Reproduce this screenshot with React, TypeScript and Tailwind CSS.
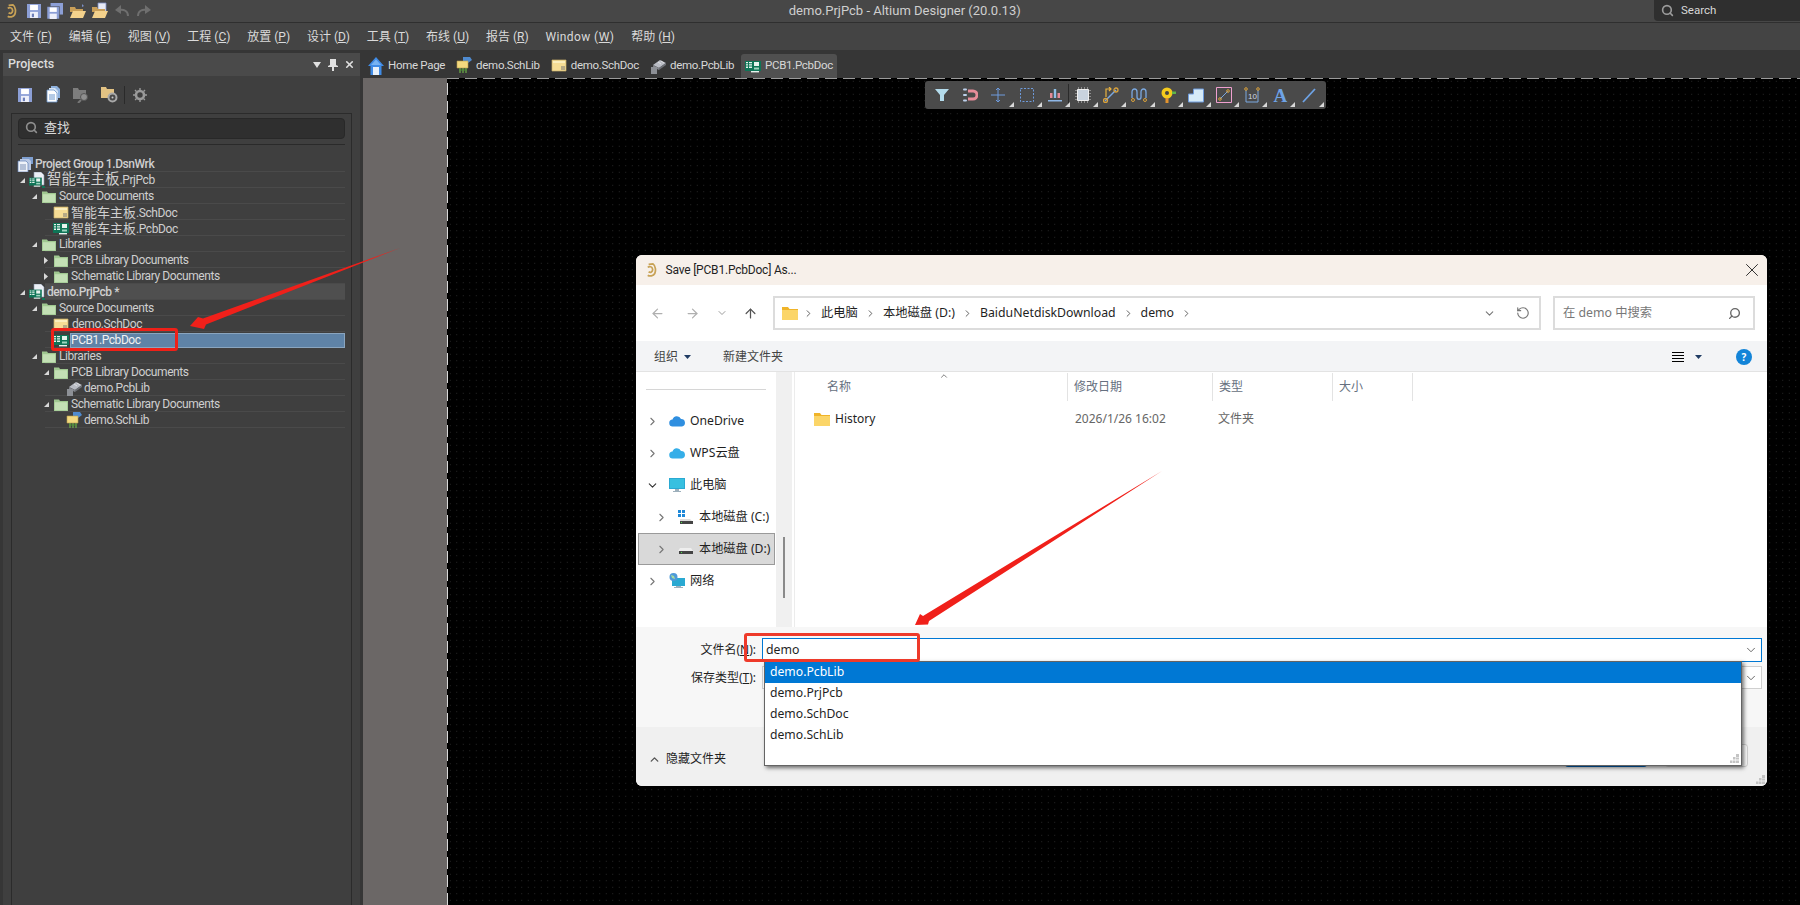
import React from 'react';
import { ArrowLeft, ArrowRight, ArrowUp, ChevronDown, ChevronRight, ChevronUp, RotateCw, Search, X } from 'lucide-react';

// small drawn icons
const Logo = ({ size = 14 }: { size?: number }) => (
  <svg width={size * 0.75} height={size} viewBox="0 0 12 16" fill="none" className="shrink-0">
    <path d="M3 1.500 L8 1 C11 3 11.500 9 10 12 C8.500 15 4 15.500 2 14 M2 5 C4 3.500 7 4 7.500 7 C8 10 5 11.500 3 10" stroke="#c8a256" strokeWidth="2" />
  </svg>
);

const Floppy = ({ size = 14 }: { size?: number }) => (
  <svg width={size} height={size} viewBox="0 0 16 16" className="shrink-0">
    <path d="M0 0h16v16H0z" fill="#8c9fd6" />
    <path d="M3.500 1h9v6h-9z" fill="#fff" />
    <path d="M3.500 9h9v7h-9z" fill="#eef0fa" />
    <path d="M5.500 11h2.500v4H5.500z" fill="#6d7fb8" />
  </svg>
);

const Floppies = () => (
  <svg width="16" height="16" viewBox="0 0 18 18" className="shrink-0">
    <path d="M4 0h14v13H4z" fill="#8c9fd6" />
    <path d="M0 4h14v14H0z" fill="#8c9fd6" stroke="#444" strokeWidth=".6" />
    <path d="M3 5h8v5H3z" fill="#fff" />
    <path d="M3 12h8v6H3z" fill="#eef0fa" />
  </svg>
);

const OpenFolder = ({ page }: { page?: boolean }) => (
  <svg width="18" height="18" viewBox="0 0 18 18" className="shrink-0">
    {page && <path d="M7 1h8v9H7z" fill="#e8eaf4" stroke="#7d8fc6" strokeWidth=".8" />}
    {!page && <path d="M13 2l2 2-2 1z" fill="#7d8fc6" />}
    <path d="M1 5h5l1 2h7v3H1z" fill="#c99f58" />
    <path d="M1 16l3-7h13l-3 7z" fill="#f4d28c" />
  </svg>
);

const Undo = ({ flip }: { flip?: boolean }) => (
  <svg width="16" height="14" viewBox="0 0 16 14" fill="none" className={flip ? '-scale-x-100 shrink-0' : 'shrink-0'}>
    <path d="M14 12c0-5-4-7-9-6" stroke="#6f6f6f" strokeWidth="2" />
    <path d="M7 1L1 6l6 4z" fill="#6f6f6f" />
  </svg>
);

const Files = () => (
  <svg width="15" height="17" viewBox="0 0 15 17" className="shrink-0">
    <path d="M5 0h6l3 3v9H5z" fill="#8fb2de" />
    <path d="M3 2h6l3 3v9H3z" fill="#d4e2f3" />
    <path d="M1 4h7l3 3v9H1z" fill="#fff" stroke="#6b96cc" strokeWidth=".8" />
    <path d="M3 9h6M3 11h6M3 13h6" stroke="#6b96cc" />
  </svg>
);

const FolderSearch = () => (
  <svg width="16" height="16" viewBox="0 0 16 16" className="shrink-0">
    <path d="M0 1h5l1 2h7v9H0z" fill="#7d7d7d" />
    <circle cx="11" cy="10" r="3.500" fill="#8f8f8f" stroke="#555" />
    <path d="M8 13l-3 3" stroke="#777" strokeWidth="2" />
  </svg>
);

const FolderGear = () => (
  <svg width="17" height="17" viewBox="0 0 17 17" className="shrink-0">
    <path d="M0 1h5l1 2h7v9H0z" fill="#e2c283" />
    <circle cx="11.500" cy="11.500" r="4" fill="#4a4a4a" stroke="#a8a8a8" strokeWidth="2" />
    <circle cx="11.500" cy="11.500" r="1" fill="#c9c9c9" />
  </svg>
);

const Gear = () => (
  <svg width="14" height="14" viewBox="0 0 14 14" fill="none" className="shrink-0">
    <circle cx="7" cy="7" r="4" stroke="#9a9a9a" strokeWidth="2.600" />
    <path d="M7 0v14M0 7h14M2 2l10 10M12 2L2 12" stroke="#9a9a9a" strokeWidth="1.400" strokeDasharray="2 10 2" />
  </svg>
);

const GroupIcon = () => (
  <svg width="17" height="16" viewBox="0 0 17 16" className="shrink-0">
    <path d="M5 1h11v7H5z" fill="#7f9fd0" />
    <path d="M3 3h9l2 2v9H3z" fill="#b9c8e4" />
    <path d="M1 5h8l2 2v9H1z" fill="#eef2f9" stroke="#5f7fb5" strokeWidth=".7" />
    <path d="M3 9h6M3 11h6M3 13h6" stroke="#7a8fb5" />
  </svg>
);

const Board = () => (
  <>
    <path d="M0 2h16v10H0z" fill="#0f7557" />
    <path d="M1 3h2v1.300H1zM1 5.300h2v1.300H1zM1 7.600h2v1.300H1zM4 3h3v1.300H4zM4 5.300h3v1.300H4zM4 7.600h3v1.300H4z" fill="#e7f3ee" />
    <path d="M9 3h5v4H9z" fill="#e7f3ee" />
    <path d="M9 8.500h5v2H9z" fill="#9fd6c0" />
    <path d="M6 12h8v1.400H6z" fill="#e7f3ee" />
  </>
);

const PcbIcon = () => (
  <svg width="16" height="14" viewBox="0 0 16 14" className="shrink-0"><Board /></svg>
);

const ProjectIcon = () => (
  <svg width="16" height="16" viewBox="0 0 16 16" className="shrink-0">
    <path d="M5 0h7l3 3v10H5z" fill="#eceff5" stroke="#8b97ad" strokeWidth=".6" />
    <g transform="translate(0 4) scale(.8)"><Board /></g>
    <path d="M13 14h3v2h-3z" fill="#0f7557" />
  </svg>
);

const SchDocIcon = () => (
  <svg width="16" height="13" viewBox="0 0 16 13" className="shrink-0">
    <path d="M1 1h14v11H1z" fill="#f6dd95" stroke="#c9b06a" strokeWidth=".7" />
    <path d="M2 2h12v2H2z" fill="#fbeebd" />
    <path d="M10 8h4M10 10h4" stroke="#777" />
  </svg>
);

const GreenFolder = () => (
  <svg width="14" height="13" viewBox="0 0 14 13" className="shrink-0">
    <path d="M0 1.500h5l1 1.500h8v10H0z" fill="#9fc890" />
    <path d="M.8 4.200h12.400V12.300H.8z" fill="#c3e0b5" />
  </svg>
);

const SchLibIcon = () => (
  <svg width="16" height="17" viewBox="0 0 16 17" className="shrink-0">
    <path d="M7 0h7l2 3-4 3H7z" fill="#4f8bd0" />
    <path d="M1 4h11v7H1z" fill="#f3d97f" stroke="#b89e4a" strokeWidth=".6" />
    <path d="M4 11v5M7 11v5M10 11v5" stroke="#6fb04a" strokeWidth="1.200" />
    <path d="M3 13h8" stroke="#4e8f3a" />
  </svg>
);

const PcbLibIcon = () => (
  <svg width="16" height="16" viewBox="0 0 16 16" className="shrink-0">
    <path d="M3 7l7-5 6 3-7 5z" fill="#b9bcc4" />
    <path d="M3 7l6 3v2l-6-3z" fill="#80838a" />
    <path d="M9 10l7-5v2l-7 5z" fill="#6d7076" />
    <path d="M1 9h6v7H1z" fill="#8d9096" />
    <path d="M8 4l3 2M11 3l3 2" stroke="#eee" strokeWidth=".7" />
  </svg>
);

const HomeIcon = () => (
  <svg width="16" height="18" viewBox="0 0 16 18" className="shrink-0">
    <path d="M8 0L0 9h2.500v9h11V9H16z" fill="#3f8be6" />
    <path d="M5 10h6v8H5z" fill="#e8f1fb" />
    <path d="M8 2.500L3 8h10z" fill="#78b3f2" />
  </svg>
);

// tool icons for the floating pcb bar
const tools = [
  <path key="f" d="M1 2h14l-5 6v6H6V8z" fill="#b4dcec" />,
  <g key="m" fill="none"><path d="M6 4h5a4 4 0 010 8H6" stroke="#e58c99" strokeWidth="3" /><path d="M2 2.500h2M2 8h2M2 13.500h2" stroke="#bcd0ea" strokeWidth="2" strokeLinecap="round" /></g>,
  <path key="c" d="M8 1v14M1 8h14M6 3l2-2 2 2M6 13l2 2 2-2" stroke="#6e9bdc" fill="none" />,
  <path key="r" d="M1.500 1.500h13v13h-13z" stroke="#6e9bdc" strokeDasharray="2 1.500" fill="none" />,
  <g key="b"><path d="M3 6h2.500v5H3zM10.500 6H13v5h-2.500z" fill="#e58c99" /><path d="M6.800 2h2.400v9H6.800z" fill="#8fc0e8" /><path d="M1 13h14v1.500H1z" fill="#8fb7e6" /></g>,
  <g key="i"><path d="M1 3v1M1 6v1M1 9v1M1 12v1M15 3v1M15 6v1M15 9v1M15 12v1M3 1h1M6 1h1M9 1h1M12 1h1M3 15h1M6 15h1M9 15h1M12 15h1" stroke="#d0d0d0" /><path d="M2.500 2.500h11v11h-11z" fill="#c9d3de" stroke="#efefef" /></g>,
  <g key="t" fill="none"><path d="M2 14L13 3" stroke="#7aa8e0" strokeWidth="1.400" /><circle cx="2.500" cy="13.500" r="2" stroke="#d8a13c" strokeWidth="1.300" /><circle cx="13" cy="3" r="2" stroke="#d8a13c" strokeWidth="1.300" /><path d="M3 10V2h5M6 0l2 2-2 2" stroke="#e8b23f" strokeWidth="1.200" /></g>,
  <g key="w" fill="none"><path d="M1 11V5c0-4 5-4 5 0v5c0 3 4 3 4 0V5c0-4 5-4 5 0v6" stroke="#7aa8e0" strokeWidth="1.300" /><circle cx="2" cy="13" r="1.500" stroke="#d8a13c" /><circle cx="14" cy="13" r="1.500" stroke="#d8a13c" /></g>,
  <g key="p"><circle cx="7" cy="6" r="5.500" fill="#f5cb1d" /><circle cx="7" cy="6" r="2" fill="#444" /><path d="M12 4.500h4v2.500h-4z" fill="#5fb548" /><path d="M5.500 11h3v5h-3z" fill="#e3942e" /></g>,
  <path key="y" d="M.5 15V7h5V2h10v13z" fill="#d6ebf7" stroke="#6e9bdc" />,
  <g key="k" fill="none"><path d="M.5.5h15v15H.5z" stroke="#f0a0d0" /><path d="M4 12l8-8" stroke="#7aa8e0" /><circle cx="4" cy="12" r="1.300" stroke="#d8a13c" /><circle cx="12" cy="4" r="1.300" stroke="#d8a13c" /></g>,
  <g key="d" fill="none"><path d="M2 3v12h12V3" stroke="#7aa8e0" /><circle cx="2" cy="2" r="1.300" stroke="#d8a13c" /><circle cx="14" cy="2" r="1.300" stroke="#d8a13c" /><text x="4" y="12" fontSize="8" fill="#cfd8e6" stroke="none" fontFamily="Liberation Sans">10</text></g>,
  null,
  <path key="l" d="M2 15L14 2" stroke="#6ea3e6" strokeWidth="1.800" />,
];

type Row = {
  pad: string;
  caret?: 'open' | 'closed';
  icon: React.ReactNode;
  label: React.ReactNode;
  hilite?: boolean;
};

const Cn = ({ children, big }: { children: React.ReactNode; big?: boolean }) => (
  <span className={big ? 'text-[14.500px] tracking-normal' : 'text-[13px] tracking-normal'}>{children}</span>
);

const rows: Row[] = [
  { pad: '-ml-px', icon: <GroupIcon />, label: <span className="pl-[1px] font-medium">Project Group 1.DsnWrk</span> },
  { pad: 'pl-[2px]', caret: 'open', icon: <ProjectIcon />, label: <span className="pl-[2px]"><Cn big>智能车主板</Cn>.PrjPcb</span> },
  { pad: 'pl-[14px]', caret: 'open', icon: <GreenFolder />, label: <span className="pl-[3px]">Source Documents</span> },
  { pad: 'pl-[35px]', icon: <SchDocIcon />, label: <span className="pl-[2px]"><Cn>智能车主板</Cn>.SchDoc</span> },
  { pad: 'pl-[35px]', icon: <PcbIcon />, label: <span className="pl-[2px]"><Cn>智能车主板</Cn>.PcbDoc</span> },
  { pad: 'pl-[14px]', caret: 'open', icon: <GreenFolder />, label: <span className="pl-[3px]">Libraries</span> },
  { pad: 'pl-[26px]', caret: 'closed', icon: <GreenFolder />, label: <span className="pl-[3px]">PCB Library Documents</span> },
  { pad: 'pl-[26px]', caret: 'closed', icon: <GreenFolder />, label: <span className="pl-[3px]">Schematic Library Documents</span> },
  { pad: 'pl-[2px]', caret: 'open', hilite: true, icon: <ProjectIcon />, label: <span className="pl-[2px] font-medium">demo.PrjPcb *</span> },
  { pad: 'pl-[14px]', caret: 'open', icon: <GreenFolder />, label: <span className="pl-[3px]">Source Documents</span> },
  { pad: 'pl-[35px]', icon: <SchDocIcon />, label: <span className="pl-[3px]">demo.SchDoc</span> },
  { pad: 'pl-[35px]', icon: <PcbIcon />, label: <span className="ml-[1px] flex h-[15px] w-[275px] items-center border border-[#8aa5bf] bg-[#5f83a7] text-[#f2f2f2]">PCB1.PcbDoc</span> },
  { pad: 'pl-[14px]', caret: 'open', icon: <GreenFolder />, label: <span className="pl-[3px]">Libraries</span> },
  { pad: 'pl-[26px]', caret: 'open', icon: <GreenFolder />, label: <span className="pl-[3px]">PCB Library Documents</span> },
  { pad: 'pl-[48px]', icon: <PcbLibIcon />, label: <span className="pl-[2px]">demo.PcbLib</span> },
  { pad: 'pl-[26px]', caret: 'open', icon: <GreenFolder />, label: <span className="pl-[3px]">Schematic Library Documents</span> },
  { pad: 'pl-[48px]', icon: <SchLibIcon />, label: <span className="pl-[2px]">demo.SchLib</span> },
];

const menu: [string, string][] = [
  ['文件 ', 'F'], ['编辑 ', 'E'], ['视图 ', 'V'], ['工程 ', 'C'], ['放置 ', 'P'], ['设计 ', 'D'],
  ['工具 ', 'T'], ['布线 ', 'U'], ['报告 ', 'R'], ['Window ', 'W'], ['帮助 ', 'H'],
];

const TopBars = () => (
  <>
    <div className="relative flex h-[23px] items-center border-b border-[#2f2f2f] bg-[#474747] pl-[6px]">
      <Logo />
      <div className="ml-[10px]"><Floppy /></div>
      <div className="ml-[6px]"><Floppies /></div>
      <div className="ml-[6px]"><OpenFolder /></div>
      <div className="ml-[4px]"><OpenFolder page /></div>
      <div className="ml-[5px]"><Undo /></div>
      <div className="ml-[6px]"><Undo flip /></div>
      <div className="flex-1 pl-[4px] text-center text-[13px] text-[#cfcfcf]">demo.PrjPcb - Altium Designer (20.0.13)</div>
      <div className="flex h-[21px] w-[146px] items-center self-start rounded-bl-[4px] bg-[#2f2f2f] pl-[7px] text-[11.500px] text-[#d8d8d8]">
        <Search size={13} strokeWidth={3} className="mr-[7px] text-[#9c9c9c]" />Search
      </div>
    </div>
    <div className="flex h-[27px] items-center gap-[16.800px] bg-[#444444] pl-[10px] text-[12px] text-[#dadada]">
      {menu.map(([name, key]) => (
        <span key={key} className={key === 'W' ? 'whitespace-pre tracking-[0.4px]' : 'whitespace-pre'}>{name}(<u>{key}</u>)</span>
      ))}
    </div>
  </>
);

const ProjectsPanel = () => (
  <div className="flex w-[363px] shrink-0 flex-col pl-[3px] pr-[3px] pt-[3px]">
    <div className="flex h-[23px] items-center bg-[#4a4a4a] pl-[5px] pr-[5px] text-[12.500px] font-medium text-[#dcdcdc]">
      <span className="flex-1">Projects</span>
      <svg width="8" height="6" viewBox="0 0 8 6" className="mr-[7px]"><path d="M0 0h8L4 6z" fill="#e0e0e0" /></svg>
      <svg width="10" height="12" viewBox="0 0 10 12" className="mr-[6px]"><path d="M2 0h6v6l2 1v1H6v4H4V8H0V7l2-1z" fill="#e0e0e0" /></svg>
      <X size={11} strokeWidth={3.500} className="text-[#e0e0e0]" />
    </div>
    <div className="flex flex-1 flex-col bg-[#3f3f3f] px-[8px]">
      <div className="flex h-[37px] items-center pl-[7px]">
        <Floppy />
        <div className="ml-[14px]"><Files /></div>
        <div className="ml-[12px]"><FolderSearch /></div>
        <div className="ml-[12px]"><FolderGear /></div>
        <div className="ml-[6px] h-[18px] w-px bg-[#2a2a2a]" />
        <div className="ml-[8px]"><Gear /></div>
      </div>
      <div className="flex flex-1 flex-col border border-b-0 border-[#2b2b2b] px-[6px] pt-[4px]">
        <div className="flex h-[21px] items-center rounded-[4px] border border-[#282828] bg-[#2f2f2f] pb-[2px] pl-[6px] text-[#dadada]">
          <Search size={13} strokeWidth={3} className="mr-[6px] text-[#8f8f8f]" />
          <span className="text-[13px]">查找</span>
        </div>
        <div className="mt-[5px] h-px bg-[#2a2a2a]" />
        <div className="mt-[11px] text-[12px] leading-none tracking-[-0.42px] text-[#cfcfcf]">
          {rows.map((r, i) => (
            <div key={i} className={`relative flex h-[16px] items-center ${r.pad}`}>
              {r.hilite && <div className="absolute inset-y-0 left-[27px] right-0 bg-[#4f4f4f]" />}
              <div className="absolute bottom-0 left-[27px] right-0 h-px bg-[#4a4a4a]" />
              <div className="relative flex items-center">
                {r.caret === 'open' && (
                  <svg width="5" height="5" viewBox="0 0 5 5" className={i === 1 || i === 8 ? 'mr-[4px]' : 'mr-[5px]'}><path d="M5 0v5H0z" fill="#d8d8d8" /></svg>
                )}
                {r.caret === 'closed' && (
                  <svg width="4" height="7" viewBox="0 0 4 7" className="mr-[6px]"><path d="M0 0l4 3.500L0 7z" fill="#d8d8d8" /></svg>
                )}
                {r.icon}
                {r.label}
              </div>
            </div>
          ))}
        </div>
      </div>
    </div>
  </div>
);

const Tab = ({ icon, label, active }: { icon: React.ReactNode; label: string; active?: boolean }) => (
  <div className={`flex items-center gap-[4px] text-[11.500px] tracking-[-0.3px] text-[#d8d8d8] ${active ? '-ml-[4px] h-[24px] self-end rounded-t-[3px] bg-[#505050] pl-[4px] pr-[4px]' : 'mr-[11px]'}`}>
    {icon}{label}
  </div>
);

const Canvas = () => (
  <div className="flex min-w-0 flex-1 flex-col">
    <div className="flex h-[28px] items-center pl-[5px] pt-[3px]">
      <Tab icon={<HomeIcon />} label="Home Page" />
      <Tab icon={<SchLibIcon />} label="demo.SchLib" />
      <Tab icon={<SchDocIcon />} label="demo.SchDoc" />
      <Tab icon={<PcbLibIcon />} label="demo.PcbLib" />
      <Tab icon={<PcbIcon />} label="PCB1.PcbDoc" active />
    </div>
    <div className="flex flex-1">
      <div className="w-[84px] bg-[#6b6766]" />
      <div className="relative flex-1 bg-black bg-[radial-gradient(circle,#2e2e2e_0.6px,transparent_0.8px)] bg-[length:6.500px_6.500px]">
        <div className="h-px bg-[repeating-linear-gradient(90deg,#9a9a9a_0,#9a9a9a_12px,transparent_12px,transparent_18px)]" />
        <div className="absolute left-0 top-0 h-full w-px bg-[repeating-linear-gradient(0deg,#d8d8d8_0,#d8d8d8_12px,transparent_12px,transparent_18px)]" />
        <div className="absolute left-[478px] top-[3px] flex h-[28px] items-center rounded-[3px] bg-[#4a4a4a] pl-[3px] pr-[3px]">
          {tools.map((t, i) => (
            <React.Fragment key={i}>
              {i === 5 && <div className="-ml-px h-[22px] w-px bg-[#2a2a2a]" />}
              <div className="relative flex h-[28px] w-[28.200px] items-center justify-center">
                {t ? (
                  <svg width="16" height="16" viewBox="0 0 16 16">{t}</svg>
                ) : (
                  <span className="font-['Liberation_Serif',serif] text-[19px] font-bold leading-none text-[#6ea3e6]">A</span>
                )}
                {i > 1 && <div className="absolute bottom-[2px] right-[-1px] h-0 w-0 border-b-[5px] border-l-[5px] border-b-[#d8d8d8] border-l-transparent" />}
              </div>
            </React.Fragment>
          ))}
        </div>
      </div>
    </div>
  </div>
);

const Sep = () => <ChevronRight size={11} className="mx-[7px] shrink-0 text-[#555]" />;

const Cloud = ({ tone }: { tone: string }) => (
  <svg width="16" height="12" viewBox="0 0 16 12">
    <path d="M4 11.500a3.500 3.500 0 01-.5-7A4.500 4.500 0 0112 4a3.800 3.800 0 011 7.500z" fill={tone} />
  </svg>
);

const NavItem = ({ chev, indent, icon, label, open, active }: { chev: string; indent?: boolean; icon: React.ReactNode; label: string; open?: boolean; active?: boolean }) => (
  <div className={`flex h-[32px] items-center ${active ? 'ml-[2px] mr-px border border-[#9a9a9a] bg-[#d9d9d9]' : ''}`}>
    <div className={chev}>
      {open ? <ChevronDown size={13} className="text-[#333]" /> : <ChevronRight size={13} className="text-[#777]" />}
    </div>
    <div className={indent ? 'ml-[7px] flex w-[20px] justify-center' : 'ml-[9px] flex w-[18px] justify-center'}>{icon}</div>
    <span className="ml-[4px] whitespace-nowrap text-[12.200px]">{label}</span>
  </div>
);

const Header = ({ w, label }: { w: string; label: string }) => (
  <div className={`flex h-[28px] items-center border-r border-[#e3e3e3] pl-[6px] text-[#667080] ${w}`}>{label}</div>
);

const YellowFolder = () => (
  <svg width="16" height="13" viewBox="0 0 16 13" className="shrink-0">
    <path d="M0 0h6l1.500 2H16v3H0z" fill="#f0b429" />
    <path d="M0 3h16v10H0z" fill="#fbd568" />
  </svg>
);

const Grip = ({ className }: { className: string }) => (
  <svg width="9" height="9" viewBox="0 0 9 9" className={className}>
    <path d="M6 0h3v3H6zM3 3h2.500v2.500H3zM6 3.500h3v2H6zM0 6.500h2.500V9H0zM3 6.500h2.500V9H3zM6 6.500h3V9H6z" fill="#c4c4c4" />
  </svg>
);

const SaveDialog = () => (
  <div className="absolute left-[636px] top-[255px] flex h-[531px] w-[1131px] flex-col overflow-hidden rounded-[6px] bg-white text-[12px] text-[#1f1f1f]">
    <div className="flex h-[30px] items-center bg-[#f7f0ea] pl-[10px] pr-[4px]">
      <Logo size={14} />
      <span className="ml-[9px] flex-1 font-['Roboto','Noto_Sans_CJK_SC',sans-serif] tracking-[-0.2px]">Save [PCB1.PcbDoc] As...</span>
      <X size={22} strokeWidth={1} className="text-[#222]" />
    </div>
    <div className="flex h-[56px] items-center pl-[14px] pr-[12px]">
      <ArrowLeft size={15} className="text-[#b0b0b0]" />
      <ArrowRight size={15} className="ml-[20px] text-[#b0b0b0]" />
      <ChevronDown size={12} className="ml-[16px] text-[#9c9c9c]" />
      <ArrowUp size={15} className="ml-[15px] text-[#555]" />
      <div className="ml-[15px] flex h-[34px] flex-1 items-center border-2 border-[#dcdcdc] pl-[7px] pr-[9px] text-[12.300px]">
        <div className="-mr-[2px]"><YellowFolder /></div>
        <Sep />
        此电脑
        <Sep />
        本地磁盘 (D:)
        <Sep />
        BaiduNetdiskDownload
        <Sep />
        demo
        <Sep />
        <ChevronDown size={13} className="ml-auto mr-[20px] text-[#777]" />
        <RotateCw size={14} className="-scale-x-100 text-[#777]" />
      </div>
      <div className="ml-[12px] flex h-[34px] w-[202px] items-center justify-between border-2 border-[#dcdcdc] pl-[8px] pr-[12px] text-[12.300px] text-[#777]">
        在 demo 中搜索
        <Search size={13} strokeWidth={2.500} className="-scale-x-100 text-[#666]" />
      </div>
    </div>
    <div className="flex h-[31px] items-center border-b border-[#e3e3e3] bg-[#f3f4f6] pl-[18px] pr-[15px] pt-[2px] text-[#444]">
      组织
      <svg width="7" height="4" viewBox="0 0 7 4" className="ml-[6px]"><path d="M0 0h7L3.500 4z" fill="#1f3b63" /></svg>
      <span className="ml-[32px] flex-1">新建文件夹</span>
      <div className="flex flex-col gap-[2px]">
        <div className="h-px w-[12px] bg-black" /><div className="h-px w-[12px] bg-black" />
        <div className="h-px w-[12px] bg-black" /><div className="h-px w-[12px] bg-black" />
      </div>
      <svg width="7" height="4" viewBox="0 0 7 4" className="ml-[11px]"><path d="M0 0h7L3.500 4z" fill="#1f3b63" /></svg>
      <div className="ml-[34px] flex h-[16px] w-[16px] items-center justify-center rounded-full bg-[#1384d8] text-[10px] font-bold text-white">?</div>
    </div>
    <div className="flex min-h-0 flex-1">
      <div className="w-[140px] shrink-0 pt-[17px]">
        <div className="mx-[10px] h-px bg-[#d6d6d6]" />
        <div className="mt-[15px]">
          <NavItem chev="ml-[10px]" icon={<Cloud tone="#2f8fe0" />} label="OneDrive" />
          <NavItem chev="ml-[10px]" icon={<Cloud tone="#35aee8" />} label="WPS云盘" />
          <NavItem chev="ml-[10px]" open label="此电脑" icon={
            <svg width="16" height="15" viewBox="0 0 16 15"><path d="M0 0h16v11H0z" fill="#2aa9d2" /><path d="M1 1h14v9H1z" fill="#37c0e0" /><path d="M6 11h4v2H6zM4 13h8v1H4z" fill="#9eb0bc" /></svg>
          } />
          <NavItem chev="ml-[19px]" indent label="本地磁盘 (C:)" icon={
            <svg width="15" height="15" viewBox="0 0 15 15"><path d="M0 0h3v3H0zM4 0h3v3H4zM0 4h3v3H0zM4 4h3v3H4z" fill="#1e88d8" /><path d="M2 9h10l2 2H2z" fill="#ddd" /><path d="M2 11h13v3H2z" fill="#444" /><path d="M3 12h1v1H3z" fill="#4ce64c" /></svg>
          } />
          <NavItem chev="ml-[16px]" indent active label="本地磁盘 (D:)" icon={
            <svg width="15" height="15" viewBox="0 0 15 15"><path d="M2 6h11l2 3H0z" fill="#eee" /><path d="M1 9h14v3H1z" fill="#444" /><path d="M3 10h1v1H3z" fill="#4ce64c" /></svg>
          } />
          <NavItem chev="ml-[10px]" label="网络" icon={
            <svg width="16" height="16" viewBox="0 0 16 16"><path d="M3 5h13v8H3z" fill="#2aa9d2" /><path d="M7 13h5v1H7zM5 14h9v1H5z" fill="#9eb0bc" /><circle cx="4.500" cy="4" r="4" fill="#4f9ad8" /><path d="M2 2l3 1 1 3-3-1z" fill="#a6dca0" /></svg>
          } />
        </div>
      </div>
      <div className="relative w-[16px] shrink-0 bg-[#f0f0f0]">
        <div className="absolute left-[7px] top-[165px] h-[61px] w-[2px] bg-[#8a8a8a]" />
      </div>
      <div className="ml-[2px] flex-1 border-l border-[#ececec]">
        <div className="relative mt-px flex">
          <div className="absolute left-[144px] -top-[2px]"><ChevronUp size={10} className="text-[#666]" /></div>
          <Header w="w-[273px] pl-[32px]" label="名称" />
          <Header w="w-[145px]" label="修改日期" />
          <Header w="w-[120px]" label="类型" />
          <Header w="w-[80px]" label="大小" />
        </div>
        <div className="mt-[3px] flex h-[30px] items-center">
          <div className="ml-[19px] flex w-[254px] items-center gap-[5px]"><YellowFolder />History</div>
          <div className="w-[145px] pl-[7px] text-[#666]">2026/1/26 16:02</div>
          <div className="pl-[5px] text-[#666]">文件夹</div>
        </div>
      </div>
    </div>
    <div className="flex h-[100px] shrink-0 flex-col bg-[#f7f7f7] pl-[54px] pr-[5px] pt-[11px]">
      <div className="flex h-[24px] items-center">
        <span className="w-[66px] whitespace-nowrap text-right text-[12px]">文件名(<u>N</u>):</span>
        <div className="ml-[6px] flex h-[24px] flex-1 items-center border border-[#0078d4] bg-white pl-[3px] pr-[3px] text-[12.300px]">
          <span className="flex-1">demo</span>
          <ChevronDown size={14} strokeWidth={1.500} className="text-[#555]" />
        </div>
      </div>
      <div className="mt-[4px] flex h-[23px] items-center">
        <span className="w-[66px] whitespace-nowrap text-right text-[12px]">保存类型(<u>T</u>):</span>
        <div className="ml-[6px] flex h-[23px] flex-1 items-center justify-end border border-[#cfcfcf] bg-white pr-[3px]">
          <ChevronDown size={14} strokeWidth={1.500} className="text-[#555]" />
        </div>
      </div>
    </div>
    <div className="flex h-[59px] shrink-0 items-start justify-between bg-[#f0f0f0] pl-[12px] pr-[19px] pt-[17px]">
      <div className="flex h-[30px] items-center gap-[5px]">
        <ChevronUp size={13} strokeWidth={2.500} className="text-[#555]" />隐藏文件夹
      </div>
      <div className="flex gap-[18px]">
        <div className="h-[23px] w-[82px] rounded-[3px] bg-[#0067c0]" />
        <div className="h-[23px] w-[83px] rounded-[3px] border border-[#cfcfcf] bg-[#fbfbfb]" />
      </div>
    </div>
    {/* autocomplete list sits over the form */}
    <div className="absolute left-[128px] top-[406px] flex h-[105px] w-[978px] flex-col border border-[#646464] bg-white text-[12.200px] shadow-[2px_2px_4px_rgba(0,0,0,0.55)]">
      <div className="flex h-[20.500px] items-center bg-[#0078d4] pl-[5px] text-white">demo.PcbLib</div>
      <div className="flex h-[21px] items-center pl-[5px]">demo.PrjPcb</div>
      <div className="flex h-[21px] items-center pl-[5px]">demo.SchDoc</div>
      <div className="flex h-[21px] items-center pl-[5px]">demo.SchLib</div>
      <Grip className="absolute bottom-[2px] right-[2px]" />
    </div>
    <Grip className="absolute bottom-[2px] right-[2px]" />
  </div>
);

// red marks drawn on top of the screenshot
const Annotations = () => (
  <>
    <svg width="1800" height="905" viewBox="0 0 1800 905" className="pointer-events-none absolute left-0 top-0">
      <path d="M190 326L198 317L203 318.500L400 248L206 324.500L204 329Z" fill="#f0201a" />
      <path d="M915 625L920 614L923 616L1162 471L929 621L928 624.500Z" fill="#f0201a" />
    </svg>
    <div className="absolute left-[51px] top-[328px] h-[23px] w-[127px] rounded-[3px] border-[3px] border-[#ee2018]" />
    <div className="absolute left-[744px] top-[633px] h-[29px] w-[176px] rounded-[3px] border-[3px] border-[#ee3a2a]" />
  </>
);

export default function App() {
  return (
    <div className="relative h-[905px] w-[1800px] overflow-hidden bg-[#363636] font-['Roboto','Noto_Sans_CJK_SC',sans-serif]">
      <TopBars />
      <div className="flex h-[855px]">
        <ProjectsPanel />
        <Canvas />
      </div>
      <div className="font-['Noto_Sans','Noto_Sans_CJK_SC',sans-serif]">
        <SaveDialog />
      </div>
      <Annotations />
    </div>
  );
}
